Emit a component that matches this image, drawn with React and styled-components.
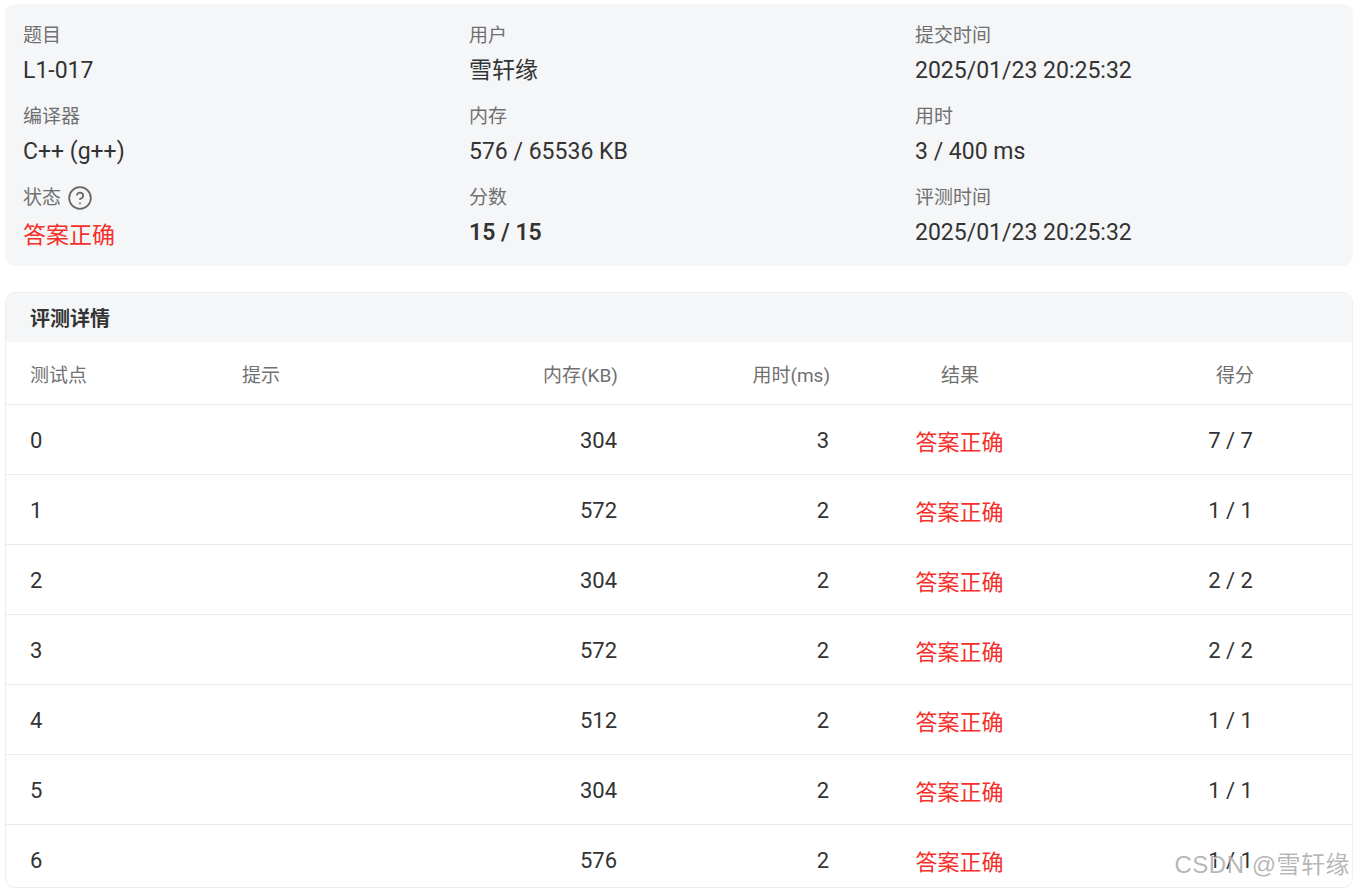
import React from 'react';
import styled, { createGlobalStyle } from 'styled-components';

const GlobalStyle = createGlobalStyle`
    *, *::before, *::after {
        box-sizing: border-box;
    }
    html, body {
        margin: 0;
        padding: 0;
        background: #ffffff;
        overflow: hidden;
    }
    body {
        font-family: Roboto, "Noto Sans CJK SC", sans-serif;
        color: #333;
    }
`;

const Page = styled.div`
    position: relative;
    width: 1354px;
    height: 888px;
    padding: 4px 1px 0 5px;
    display: flex;
    flex-direction: column;
    gap: 26px;
    overflow: hidden;
`;

const InfoCard = styled.div`
    background: #f5f6f8;
    border-radius: 10px;
    padding: 19px 18px 18px;
    display: grid;
    grid-template-columns: repeat(3, 1fr);
    column-gap: 26px;
    row-gap: 18px;
`;

const InfoItem = styled.div`
    display: flex;
    flex-direction: column;
    gap: 7px;
`;

const Label = styled.div`
    display: flex;
    align-items: center;
    gap: 6px;
    font-size: 19px;
    line-height: 26px;
    color: #707070;
`;

const Value = styled.div`
    font-size: 23px;
    line-height: 30px;
    color: ${p => (p.$ok ? '#f5302a' : '#333')};
    font-weight: ${p => (p.$strong ? 600 : 400)};
    font-family: ${p => (p.$ok ? '"Noto Sans CJK SC", sans-serif' : 'inherit')};
`;

const DetailCard = styled.div`
    border: 1px solid #ebeef2;
    border-radius: 10px;
    overflow: hidden;
    flex: 1;
`;

const DetailHeader = styled.div`
    background: #f5f6f8;
    height: 49px;
    padding: 0 24px;
    display: flex;
    align-items: center;
    font-size: 20px;
    font-weight: 600;
    color: #333;
`;

const Table = styled.div`
    display: grid;
    grid-template-columns: repeat(6, 212px) 1fr;
`;

const Row = styled.div`
    display: contents;
`;

const Cell = styled.div`
    height: ${p => (p.$head ? '63px' : '70px')};
    border-bottom: 1px solid #ebebeb;
    padding: ${p => (p.$head ? '0 24px' : '1px 25px 0 24px')};
    display: flex;
    align-items: center;
    justify-content: ${p =>
        p.$align === 'right' ? 'flex-end' : p.$align === 'center' ? 'center' : 'flex-start'};
    font-size: ${p => (p.$head ? '19px' : '22px')};
    color: ${p => (p.$head ? '#707070' : p.$ok ? '#f5302a' : '#333')};
    font-family: ${p => (p.$ok ? '"Noto Sans CJK SC", sans-serif' : 'inherit')};
    white-space: nowrap;
`;

const Watermark = styled.div`
    position: absolute;
    right: 4px;
    bottom: 8px;
    font-size: 24px;
    color: rgba(120, 120, 120, 0.55);
    text-shadow: 1px 1px 1px rgba(255, 255, 255, 0.9);
    font-family: "Liberation Sans", "Noto Sans CJK SC", sans-serif;
    letter-spacing: 0.5px;
`;

const HelpIcon = () => (
    <svg width="26" height="26" viewBox="0 0 24 24" fill="none" stroke="#666"
        strokeWidth="1.6" strokeLinecap="round" strokeLinejoin="round">
        <circle cx="12" cy="12" r="10" />
        <path d="M9.09 9a3 3 0 0 1 5.83 1c0 2-3 3-3 3" />
        <path d="M12 17h.01" />
    </svg>
);

const info = [
    { label: '题目', value: 'L1-017' },
    { label: '用户', value: '雪轩缘' },
    { label: '提交时间', value: '2025/01/23 20:25:32' },
    { label: '编译器', value: 'C++ (g++)' },
    { label: '内存', value: '576 / 65536 KB' },
    { label: '用时', value: '3 / 400 ms' },
    { label: '状态', value: '答案正确', help: true, ok: true },
    { label: '分数', value: '15 / 15', strong: true },
    { label: '评测时间', value: '2025/01/23 20:25:32' },
];

const columns = [
    { title: '测试点', align: 'left' },
    { title: '提示', align: 'left' },
    { title: '内存(KB)', align: 'right' },
    { title: '用时(ms)', align: 'right' },
    { title: '结果', align: 'center' },
    { title: '得分', align: 'right' },
];

const cases = [
    ['0', '', '304', '3', '答案正确', '7 / 7'],
    ['1', '', '572', '2', '答案正确', '1 / 1'],
    ['2', '', '304', '2', '答案正确', '2 / 2'],
    ['3', '', '572', '2', '答案正确', '2 / 2'],
    ['4', '', '512', '2', '答案正确', '1 / 1'],
    ['5', '', '304', '2', '答案正确', '1 / 1'],
    ['6', '', '576', '2', '答案正确', '1 / 1'],
];

export default function App() {
    return (
        <Page>
            <GlobalStyle />
            <InfoCard>
                {info.map(item => (
                    <InfoItem key={item.label}>
                        <Label>
                            {item.label}
                            {item.help && <HelpIcon />}
                        </Label>
                        <Value $ok={item.ok} $strong={item.strong}>{item.value}</Value>
                    </InfoItem>
                ))}
            </InfoCard>

            <DetailCard>
                <DetailHeader>评测详情</DetailHeader>
                <Table>
                    <Row>
                        {columns.map(col => (
                            <Cell key={col.title} $head $align={col.align}>{col.title}</Cell>
                        ))}
                        <Cell $head />
                    </Row>
                    {cases.map(row => (
                        <Row key={row[0]}>
                            {row.map((v, i) => (
                                <Cell key={i} $align={columns[i].align} $ok={i === 4}>{v}</Cell>
                            ))}
                            <Cell />
                        </Row>
                    ))}
                </Table>
            </DetailCard>

            <Watermark>CSDN @雪轩缘</Watermark>
        </Page>
    );
}
